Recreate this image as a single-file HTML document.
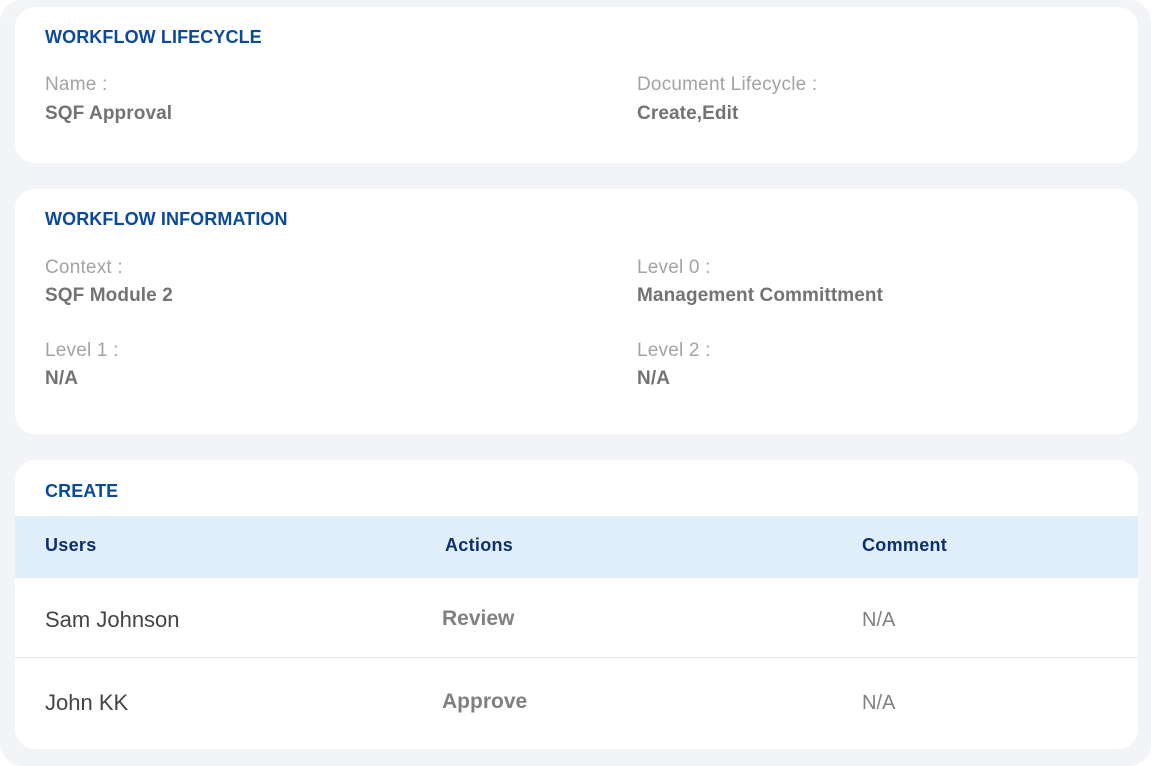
<!DOCTYPE html>
<html><head><style>
*{margin:0;padding:0;box-sizing:border-box}
body{width:1151px;height:766px;background:#fff;font-family:"Liberation Sans",sans-serif;position:relative;overflow:hidden}
.outer{position:absolute;left:0;top:0;width:1151px;height:766px;background:#f3f4f8;border-radius:22px}
.card{position:absolute;left:15px;width:1123px;background:#fff;border-radius:20px;overflow:hidden}
.h{position:absolute;left:30px;font-size:18px;font-weight:bold;color:#0b4a9a;letter-spacing:0.1px}
.l{position:absolute;font-size:19px;color:#a3a3a3;letter-spacing:0.2px}
.v{position:absolute;font-size:19px;color:#737373;font-weight:bold;letter-spacing:0.1px}
.th{position:absolute;left:0;top:56px;width:1123px;height:62px;background:#dfeef9}
.th span{position:absolute;top:19px;font-size:18px;font-weight:bold;color:#0d2f6b;letter-spacing:0.3px}
.r{position:absolute;font-size:21px}
</style></head><body>
<div class="outer"></div>
<div class="card" style="top:7px;height:156px">
 <div class="h" style="top:20px">WORKFLOW LIFECYCLE</div>
 <div class="l" style="left:30px;top:67px">Name :</div>
 <div class="v" style="left:30px;top:96px">SQF Approval</div>
 <div class="l" style="left:622px;top:67px">Document Lifecycle :</div>
 <div class="v" style="left:622px;top:96px">Create,Edit</div>
</div>
<div class="card" style="top:189px;height:245px">
 <div class="h" style="top:20px">WORKFLOW INFORMATION</div>
 <div class="l" style="left:30px;top:68px">Context :</div>
 <div class="v" style="left:30px;top:96px">SQF Module 2</div>
 <div class="l" style="left:622px;top:68px">Level 0 :</div>
 <div class="v" style="left:622px;top:96px">Management Committment</div>
 <div class="l" style="left:30px;top:151px">Level 1 :</div>
 <div class="v" style="left:30px;top:179px">N/A</div>
 <div class="l" style="left:622px;top:151px">Level 2 :</div>
 <div class="v" style="left:622px;top:179px">N/A</div>
</div>
<div class="card" style="top:460px;height:289px">
 <div class="h" style="top:21px">CREATE</div>
 <div class="th"><span style="left:30px">Users</span><span style="left:430px">Actions</span><span style="left:847px">Comment</span></div>
 <div class="r" style="left:30px;top:147px;color:#444;font-size:22px">Sam Johnson</div>
 <div class="r" style="left:427px;top:147px;color:#808080;font-weight:bold">Review</div>
 <div class="r" style="left:847px;top:149px;color:#808080;font-size:20px">N/A</div>
 <div style="position:absolute;left:0;top:197px;width:1123px;height:1px;background:#e6e6e6"></div>
 <div class="r" style="left:30px;top:230px;color:#444;font-size:22px">John KK</div>
 <div class="r" style="left:427px;top:230px;color:#808080;font-weight:bold">Approve</div>
 <div class="r" style="left:847px;top:232px;color:#808080;font-size:20px">N/A</div>
</div>
</body></html>
